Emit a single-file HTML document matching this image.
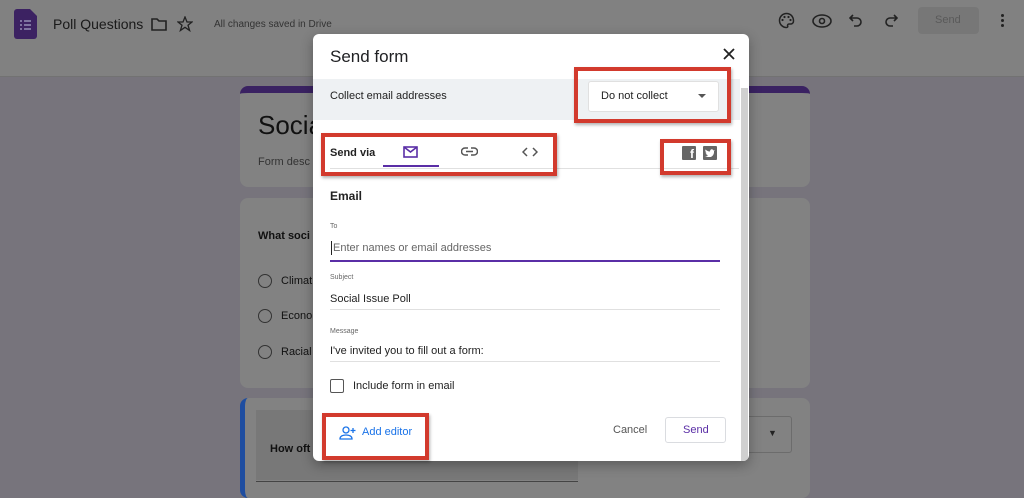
<!DOCTYPE html>
<html style="background:#77747c"><head><meta charset="utf-8"><style>
*{box-sizing:border-box;margin:0;padding:0}
body{width:1024px;height:491px;overflow:hidden;background:#77747c;font-family:"Liberation Sans",Arial,sans-serif;position:relative}
.abs{position:absolute}
.hdr{left:0;top:0;width:1024px;height:77px;background:#818181;border-bottom:1px solid #727272}
.card{background:#828282;border-radius:8px}
.red{position:absolute;border:4px solid #d23a2d;box-shadow:1px 2px 3px rgba(0,0,0,.3)}
.t{position:absolute;white-space:nowrap}
.line{position:absolute;height:1px;background:#e0e0e0}
</style></head><body>
<div class="abs" style="left:0;top:0;width:1024px;height:491px;background:#77747c"></div>
<div class="abs hdr"></div>
<svg class="abs" style="left:14px;top:9px" width="23" height="30"><path d="M0 3a3 3 0 0 1 3-3h13l7 7v20a3 3 0 0 1-3 3H3a3 3 0 0 1-3-3z" fill="#3c2262"/><g fill="#7e74a0"><rect x="6" y="11" width="2" height="2"/><rect x="6" y="15" width="2" height="2"/><rect x="6" y="19" width="2" height="2"/><rect x="10" y="11" width="7" height="2"/><rect x="10" y="15" width="7" height="2"/><rect x="10" y="19" width="7" height="2"/></g></svg>
<div class="t" style="left:53px;top:16px;font-size:14px;color:#1a1a1a">Poll Questions</div>
<svg class="abs" style="left:151px;top:17px" width="16" height="14"><path d="M1 2h5l2 2h7v9H1z" fill="none" stroke="#222" stroke-width="1.6"/></svg>
<svg class="abs" style="left:177px;top:16px" width="16" height="16"><path d="M8 1l2 5h5l-4 3.2 1.6 5.300L8 11.300 3.400 14.500 5 9.200 1 6h5z" fill="none" stroke="#222" stroke-width="1.3"/></svg>
<div class="t" style="left:214px;top:19px;font-size:10px;color:#333">All changes saved in Drive</div>
<svg class="abs" style="left:778px;top:12px" width="17" height="17"><path d="M8.5 1.5a7 7 0 0 0 0 14c1 0 1.500-.7 1.200-1.500-.5-1 .2-2 1.300-2h2a3 3 0 0 0 2.500-3C15.500 4.500 12.500 1.500 8.500 1.500z" fill="none" stroke="#222" stroke-width="1.5"/><circle cx="4.500" cy="8" r="1.100" fill="#222"/><circle cx="6.500" cy="5" r="1.100" fill="#222"/><circle cx="10.500" cy="5" r="1.100" fill="#222"/><circle cx="12.500" cy="8" r="1.100" fill="#222"/></svg>
<svg class="abs" style="left:812px;top:14px" width="20" height="14"><ellipse cx="10" cy="7" rx="9" ry="6" fill="none" stroke="#222" stroke-width="1.6"/><circle cx="10" cy="7" r="2.5" fill="none" stroke="#222" stroke-width="1.6"/></svg>
<svg class="abs" style="left:849px;top:13px" width="14" height="14"><path d="M4 2L1 5l3 3M1 5h7a4 4 0 0 1 0 8H5" fill="none" stroke="#222" stroke-width="1.6"/></svg>
<svg class="abs" style="left:884px;top:13px" width="14" height="14"><path d="M10 2l3 3-3 3M13 5H6a4 4 0 0 0 0 8h3" fill="none" stroke="#222" stroke-width="1.6"/></svg>
<div class="abs" style="left:918px;top:7px;width:61px;height:27px;background:#777;border-radius:4px"></div>
<div class="t" style="left:935px;top:14px;font-size:11px;color:#5a5a5a">Send</div>
<div class="abs" style="left:1001px;top:14px;width:3px;height:3px;background:#222;border-radius:50%;box-shadow:0 5px #222,0 10px #222"></div>

<div class="abs card" style="left:240px;top:86px;width:570px;height:101px;border-top:7px solid #3a2262"></div>
<div class="t" style="left:258px;top:110px;font-size:26px;color:#111">Socia</div>
<div class="t" style="left:258px;top:156px;font-size:11px;color:#333">Form desc</div>
<div class="abs card" style="left:240px;top:198px;width:570px;height:190px"></div>
<div class="t" style="left:258px;top:230px;font-size:11px;font-weight:bold;color:#111">What soci</div>
<div class="abs" style="left:258px;top:274px;width:14px;height:14px;border:1.5px solid #333;border-radius:50%"></div><div class="t" style="left:281px;top:275px;font-size:11px;color:#111">Climat</div>
<div class="abs" style="left:258px;top:309px;width:14px;height:14px;border:1.5px solid #333;border-radius:50%"></div><div class="t" style="left:281px;top:310px;font-size:11px;color:#111">Econo</div>
<div class="abs" style="left:258px;top:345px;width:14px;height:14px;border:1.5px solid #333;border-radius:50%"></div><div class="t" style="left:281px;top:346px;font-size:11px;color:#111">Racial</div>
<div class="abs card" style="left:240px;top:398px;width:570px;height:100px;border-left:5px solid #1e4da0"></div>
<div class="abs" style="left:256px;top:410px;width:322px;height:70px;background:#787878"></div>
<div class="abs" style="left:256px;top:481px;width:322px;height:1px;background:#444"></div>
<div class="t" style="left:270px;top:443px;font-size:11px;font-weight:bold;color:#111">How oft</div>
<div class="abs" style="left:700px;top:416px;width:92px;height:37px;border:1px solid #6c6c6c;border-radius:3px"></div>
<div class="t" style="left:768px;top:428px;font-size:9px;color:#222">▼</div>

<div class="abs" style="left:313px;top:34px;width:436px;height:427px;background:#fff;border-radius:6px;box-shadow:0 4px 12px rgba(0,0,0,.3);overflow:hidden">
<div class="t" style="left:17px;top:13px;font-size:17px;color:#202124">Send form</div>
<svg class="abs" style="left:410px;top:14px" width="12" height="12"><path d="M1 1l10 10M11 1L1 11" stroke="#222" stroke-width="1.8"/></svg>
<div class="abs" style="left:0;top:45px;width:427px;height:41px;background:#eef1f3"></div>
<div class="t" style="left:17px;top:56px;font-size:11px;color:#222">Collect email addresses</div>
<div class="abs" style="left:275px;top:47px;width:131px;height:31px;background:#fff;border:1px solid #e0e0e0;border-radius:3px"></div>
<div class="t" style="left:288px;top:56px;font-size:11px;color:#222">Do not collect</div>
<svg class="abs" style="left:385px;top:60px" width="8" height="5"><path d="M0 0h8L4 4z" fill="#555"/></svg>
<div class="abs" style="left:428px;top:54px;width:7px;height:373px;background:#d0d0d0"></div>
<div class="t" style="left:17px;top:113px;font-size:11px;font-weight:bold;color:#222">Send via</div>
<svg class="abs" style="left:90px;top:112px" width="15" height="12"><rect x="1" y="1" width="13" height="10" fill="none" stroke="#5a2ea6" stroke-width="1.6"/><path d="M1 1l6.5 5L14 1" fill="none" stroke="#5a2ea6" stroke-width="1.6"/></svg>
<div class="abs" style="left:70px;top:131px;width:56px;height:2px;background:#5a2ea6"></div>
<svg class="abs" style="left:148px;top:113px" width="17" height="9"><path d="M7 1H4a3.5 3.5 0 0 0 0 7h3M10 1h3a3.5 3.5 0 0 1 0 7h-3M5 4.5h7" fill="none" stroke="#555" stroke-width="1.5"/></svg>
<svg class="abs" style="left:209px;top:113px" width="16" height="10"><path d="M5 1L1 5l4 4M11 1l4 4-4 4" fill="none" stroke="#555" stroke-width="1.5"/></svg>
<div class="line" style="left:17px;top:134px;width:409px"></div>
<div class="abs" style="left:369px;top:112px;width:14px;height:14px;background:#666;border-radius:1px;color:#fff;font-size:12px;font-weight:bold;text-align:right;padding-right:2px;line-height:17px">f</div>
<div class="abs" style="left:390px;top:112px;width:14px;height:14px;background:#666;border-radius:1px"></div>
<svg class="abs" style="left:392px;top:115px" width="10" height="8"><path d="M10 1l-1.5.5C8 .5 7 0 6 .5 5 1 5 2 5 2.5 3 2.5 1.5 1.5.5.5c-.5 1 0 2.5 1 3-.5 0-1 0-1-.3 0 1 1 2 2 2-.5.2-1 .2-1.3 0 .3 1 1.300 1.3 2 1.300C2.300 7.300 1 7.800 0 7.500 4 10 9.500 7.500 9 2z" fill="#fff"/></svg>
<div class="t" style="left:17px;top:155px;font-size:12px;font-weight:bold;color:#222">Email</div>
<div class="t" style="left:17px;top:189px;font-size:7px;color:#666">To</div>
<div class="t" style="left:20px;top:208px;font-size:11px;color:#666">Enter names or email addresses</div>
<div class="abs" style="left:18px;top:207px;width:1px;height:14px;background:#222"></div>
<div class="abs" style="left:17px;top:226px;width:390px;height:2px;background:#5a2ea6"></div>
<div class="t" style="left:17px;top:240px;font-size:7px;color:#666">Subject</div>
<div class="t" style="left:17px;top:259px;font-size:11px;color:#222">Social Issue Poll</div>
<div class="line" style="left:17px;top:275px;width:390px"></div>
<div class="t" style="left:17px;top:294px;font-size:7px;color:#666">Message</div>
<div class="t" style="left:17px;top:311px;font-size:11px;color:#222">I've invited you to fill out a form:</div>
<div class="line" style="left:17px;top:327px;width:390px"></div>
<div class="abs" style="left:17px;top:345px;width:14px;height:14px;border:1.5px solid #555;border-radius:2px"></div>
<div class="t" style="left:40px;top:346px;font-size:11px;color:#222">Include form in email</div>
<svg class="abs" style="left:26px;top:392px" width="18" height="14"><circle cx="7" cy="4" r="3" fill="none" stroke="#1a73e8" stroke-width="1.3"/><path d="M1 13c0-3 3-4 6-4s6 1 6 4z" fill="none" stroke="#1a73e8" stroke-width="1.3"/><path d="M14 2v5M11.5 4.5h5" stroke="#1a73e8" stroke-width="1.3"/></svg>
<div class="t" style="left:49px;top:392px;font-size:11px;color:#1a73e8">Add editor</div>
<div class="t" style="left:300px;top:390px;font-size:11px;color:#555">Cancel</div>
<div class="abs" style="left:352px;top:383px;width:61px;height:26px;border:1px solid #dadce0;border-radius:3px"></div>
<div class="t" style="left:370px;top:390px;font-size:11px;color:#5a2ea6">Send</div>
</div>

<div class="red" style="left:574px;top:67px;width:157px;height:56px"></div>
<div class="red" style="left:321px;top:133px;width:236px;height:43px"></div>
<div class="red" style="left:660px;top:139px;width:71px;height:36px"></div>
<div class="red" style="left:322px;top:413px;width:107px;height:47px"></div>
</body></html>
